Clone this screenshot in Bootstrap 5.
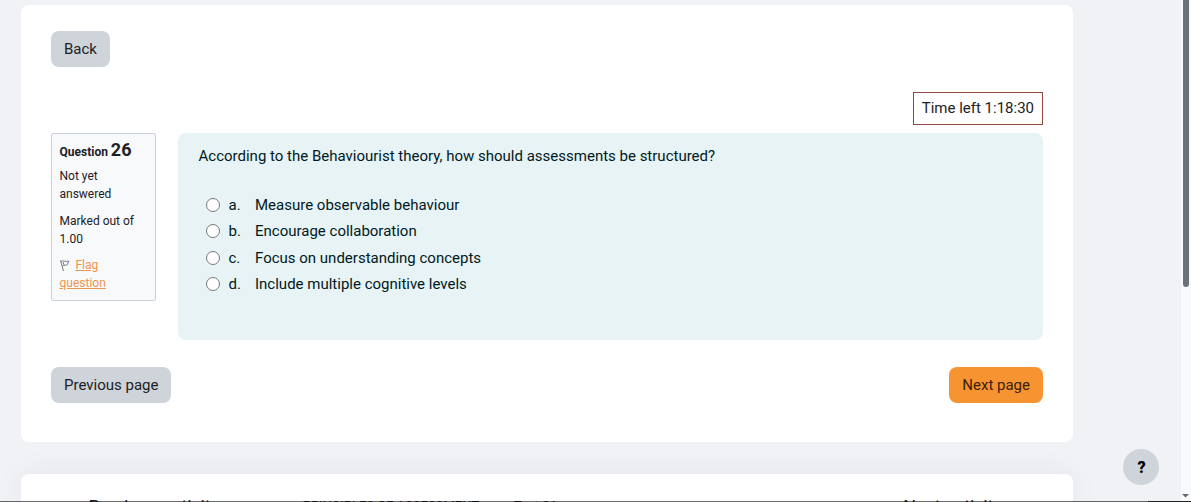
<!DOCTYPE html>
<html lang="en">

<head>
    <meta charset="UTF-8">
    <meta name="viewport" content="width=device-width, initial-scale=1.0">
    <title>Quiz</title>
    <link href="https://cdn.jsdelivr.net/npm/bootstrap@5.3.0/dist/css/bootstrap.min.css" rel="stylesheet">
    <style>
        body {
            height: 502px;
            overflow: hidden;
            background-color: #f1f2f6;
            color: #1d2125;
            font-family: Roboto, sans-serif;
            font-size: 15px;
            line-height: 22.5px;
        }

        .page-wrap {
            width: 1094px;
            height: 502px;
            overflow: hidden;
            padding: 5px 21px 0;
        }

        .panel {
            background-color: #fff;
            border-radius: 8px;
        }

        .quiz-panel {
            height: 437px;
            padding: 26px 30px 0;
        }

        .activity-panel {
            height: 28px;
            margin-top: 32px;
            padding: 22px 71px 0 67.5px;
            border-radius: 8px 8px 0 0;
            box-shadow: 0 0 32px rgba(30, 40, 70, 0.06);
            font-size: 18px;
        }

        .activity-name {
            width: 280px;
            margin-right: 237px;
            gap: 35px;
            font-size: 13px;
            line-height: 20px;
        }

        .btn {
            --bs-btn-font-size: 15px;
            --bs-btn-line-height: 22.5px;
            --bs-btn-border-radius: 8px;
            height: 36px;
            padding: 6px 12px;
        }

        .btn-grey {
            --bs-btn-color: #1d2125;
            --bs-btn-bg: #ced4da;
            --bs-btn-hover-bg: #bfc6cd;
        }

        .btn-orange {
            --bs-btn-color: #3b2007;
            --bs-btn-bg: #f69431;
            --bs-btn-hover-bg: #e78724;
        }

        .timer {
            height: 33px;
            margin-top: 25px;
            padding: 4px 8px;
            border: 1px solid #91483f;
        }

        .question {
            gap: 22px;
            margin-top: 8px;
        }

        .info {
            width: 105px;
            height: 168px;
            padding: 6px 7px 7px 7.5px;
            border: 1px solid #cad0d7;
            border-radius: 2px;
            background-color: #f8f9fb;
            font-size: 12px;
            line-height: 18px;
        }

        .info h3 {
            margin-bottom: 5px;
            font-size: 12px;
            line-height: 19px;
        }

        .info h3 span {
            font-size: 18px;
        }

        .info p {
            margin-bottom: 8px;
        }

        .info p:first-of-type {
            margin-bottom: 9px;
        }

        .info svg {
            margin-right: 3px;
        }

        .info a {
            color: #ec954e;
        }

        .formulation {
            height: 207px;
            padding: 12px 20px 12px 20.5px;
            border-radius: 8px;
            background-color: #e7f3f5;
            color: #001a1e;
        }

        .answers {
            margin-top: 24px;
            padding-left: 7.5px;
        }

        .answers label {
            height: 26.5px;
            padding-top: 2px;
        }

        .answers input {
            width: 14px;
            height: 14px;
            margin: 4px 8.5px 0 0;
        }

        .letter {
            width: 26.5px;
        }

        .page-buttons {
            margin-top: 27px;
        }

        .help {
            left: 1123px;
            top: 449px;
            width: 36px;
            height: 36px;
            padding: 2px 0 0 1px;
            background-color: #ced4da;
            font-size: 16px;
            font-weight: 900;
        }

        .scroll-track {
            top: 0;
            right: 0;
            width: 10px;
            height: 502px;
            background-color: #f9fafc;
        }

        .scroll-thumb {
            width: 6px;
            height: 287px;
            margin-left: 2px;
            border-radius: 0 0 3px 3px;
            background-color: #6a737b;
        }

        .bottom-edge {
            left: 0;
            top: 501px;
            width: 1191px;
            height: 1px;
            background: linear-gradient(90deg, rgba(0, 0, 0, 0.58) 1148px, #202224 1148px);
        }
    </style>
</head>

<body>
    <div class="page-wrap">
        <main class="panel quiz-panel">
            <a class="btn btn-grey" href="#">Back</a>
            <div class="d-flex justify-content-end">
                <div class="timer">Time left 1:18:30</div>
            </div>

            <div class="question d-flex align-items-start">
                <div class="info flex-shrink-0">
                    <h3 class="fw-bold">Question <span>26</span></h3>
                    <p>Not yet answered</p>
                    <p>Marked out of 1.00</p>
                    <svg width="10" height="13" viewBox="0 0 10 13" fill="none" stroke="#777b80" stroke-width="1"><path d="M.5 1.5 3.5 12M1 2.5C3 .8 5 3.2 9 2.3L6.8 6C5 6.5 4 6 2.3 7.3M3 3l1.3 3.5"/></svg>
                    <a href="#">Flag<br>question</a>
                </div>
                <div class="formulation flex-grow-1">
                    <div>According to the Behaviourist theory, how should assessments be structured?</div>
                    <div class="answers">
                        <label class="d-flex"><input type="radio" name="answer"><span class="letter">a.</span>Measure observable behaviour</label>
                        <label class="d-flex"><input type="radio" name="answer"><span class="letter">b.</span>Encourage collaboration</label>
                        <label class="d-flex"><input type="radio" name="answer"><span class="letter">c.</span>Focus on understanding concepts</label>
                        <label class="d-flex"><input type="radio" name="answer"><span class="letter">d.</span>Include multiple cognitive levels</label>
                    </div>
                </div>
            </div>

            <div class="page-buttons d-flex justify-content-between">
                <button type="button" class="btn btn-grey">Previous page</button>
                <button type="button" class="btn btn-orange">Next page</button>
            </div>
        </main>

        <footer class="panel activity-panel d-flex justify-content-between">
            <span>Previous activity</span>
            <div class="activity-name d-flex">
                <span>PRINCIPLES OF ASSESSMENT</span>
                <span>Test 26</span>
            </div>
            <span>Next activity</span>
        </footer>
    </div>

    <button type="button" class="help position-fixed rounded-circle border-0">?</button>
    <div class="scroll-track position-fixed">
        <div class="scroll-thumb"></div>
        <svg class="position-absolute bottom-0 start-0 mb-1" width="9" height="5" viewBox="0 0 9 5"><path d="M1 1h7L4.5 4.5z" fill="#666b70"/></svg>
    </div>
    <div class="bottom-edge position-fixed"></div>

    <script src="https://cdn.jsdelivr.net/npm/bootstrap@5.3.0/dist/js/bootstrap.bundle.min.js"></script>
</body>

</html>
